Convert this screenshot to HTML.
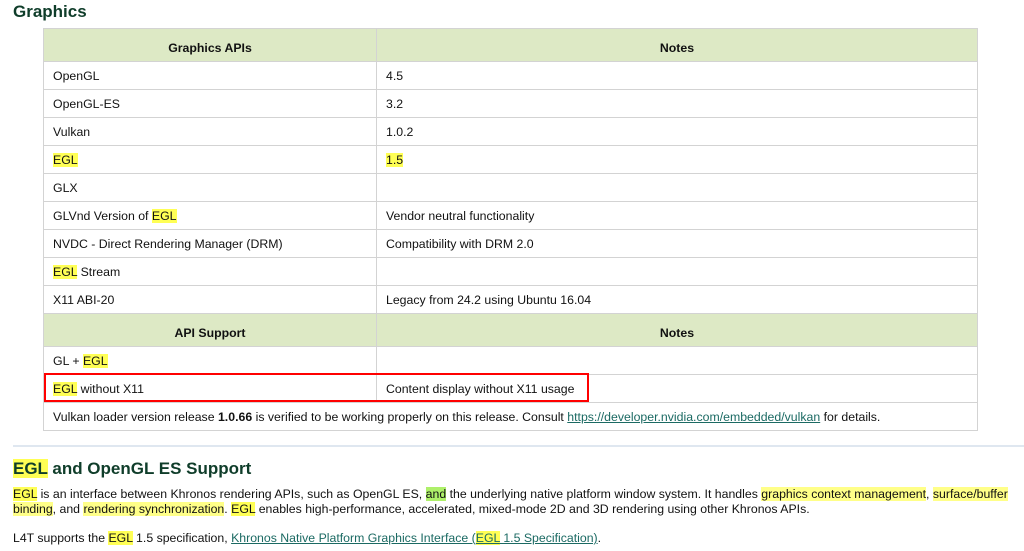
<!DOCTYPE html>
<html><head><meta charset="utf-8"><style>
body{margin:0;width:1024px;height:551px;overflow:hidden;background:#fff;font-family:"Liberation Sans",sans-serif;color:#111;font-size:12.3px}
h2{position:absolute;margin:0;font-size:17px;font-weight:bold;color:#0f3d2a}
.t{position:absolute;left:43px;top:28px;width:935px;border-collapse:collapse;table-layout:fixed}
.t td,.t th{border:1px solid #d3d3d3;padding:0 9px;height:27px;font-size:12.3px;text-align:left}
.t th{background:#dde9c5;text-align:center;font-weight:bold;height:27px;padding-top:5px}
.y{background:#ffff55}
.ly{background:#ffff88}
.g{background:#aef06a}
a{color:#1b6a63;text-decoration:underline}
.red{position:absolute;left:44px;top:373px;width:541px;height:25px;border:2px solid #f00}
.hr{position:absolute;left:13px;top:445px;width:1011px;height:2px;background:#dfe7f0}
p{position:absolute;margin:0;left:13px;font-size:12.3px;line-height:15px;white-space:nowrap}
</style></head><body>
<h2 style="left:13px;top:2px">Graphics</h2>
<table class="t">
<colgroup><col style="width:333px"><col></colgroup>
<tr><th>Graphics APIs</th><th>Notes</th></tr>
<tr><td>OpenGL</td><td>4.5</td></tr>
<tr><td>OpenGL-ES</td><td>3.2</td></tr>
<tr><td>Vulkan</td><td>1.0.2</td></tr>
<tr><td><span class="y">EGL</span></td><td><span class="y">1.5</span></td></tr>
<tr><td>GLX</td><td></td></tr>
<tr><td>GLVnd Version of <span class="y">EGL</span></td><td>Vendor neutral functionality</td></tr>
<tr><td>NVDC - Direct Rendering Manager (DRM)</td><td>Compatibility with DRM 2.0</td></tr>
<tr><td><span class="y">EGL</span> Stream</td><td></td></tr>
<tr><td>X11 ABI-20</td><td>Legacy from 24.2 using Ubuntu 16.04</td></tr>
<tr><th>API Support</th><th>Notes</th></tr>
<tr><td>GL + <span class="y">EGL</span></td><td></td></tr>
<tr><td><span class="y">EGL</span> without X11</td><td>Content display without X11 usage</td></tr>
<tr><td colspan="2">Vulkan loader version release <b>1.0.66</b> is verified to be working properly on this release. Consult <a>https://developer.nvidia.com/embedded/vulkan</a> for details.</td></tr>
</table>
<div class="red"></div>
<div class="hr"></div>
<h2 style="left:13px;top:459px"><span class="y">EGL</span> and OpenGL ES Support</h2>
<p style="top:487px"><span class="y">EGL</span> is an interface between Khronos rendering APIs, such as OpenGL ES, <span class="g">and</span> the underlying native platform window system. It handles <span class="ly">graphics context management</span>, <span class="ly">surface/buffer</span><br><span class="ly">binding</span>, and <span class="ly">rendering synchronization</span>. <span class="y">EGL</span> enables high-performance, accelerated, mixed-mode 2D and 3D rendering using other Khronos APIs.</p>
<p style="top:531px">L4T supports the <span class="y">EGL</span> 1.5 specification, <a>Khronos Native Platform Graphics Interface (<span class="y">EGL</span> 1.5 Specification)</a>.</p>
</body></html>
